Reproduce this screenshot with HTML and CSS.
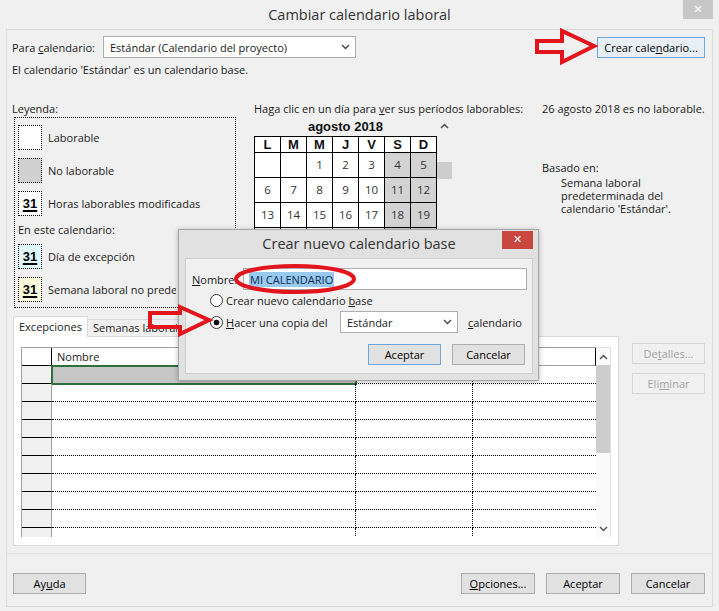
FILE: index.html
```html
<!DOCTYPE html>
<html lang="es">
<head>
<meta charset="utf-8">
<title>Cambiar calendario laboral</title>
<link rel="stylesheet" href="styles.css">
</head>
<body>
<div class="window">
  <div class="titlebar">
    <span></span>
    <div class="title">Cambiar calendario laboral</div>
    <div class="close-gray">✕</div>
  </div>
  <div class="panel">
    <div class="row-top">
      <div class="lbl">Para <u>c</u>alendario:</div>
      <div class="select sel-main"><span>Estándar (Calendario del proyecto)</span>
        <svg class="chev" width="9" height="6" viewBox="0 0 9 6"><path d="M1 1 L4.5 4.5 L8 1" fill="none" stroke="#444" stroke-width="1.3"/></svg>
      </div>
      <button class="btn btn-default btn-crear">Crear cale<u>n</u>dario...</button>
    </div>
    <div class="note">El calendario 'Estándar' es un calendario base.</div>
    <div class="main">
      <div class="col-legend">
        <div class="cap">Leyenda:</div>
        <div class="legend">
          <div class="item"><div class="sw"></div><span>Laborable</span></div>
          <div class="item"><div class="sw sw-gray"></div><span>No laborable</span></div>
          <div class="item"><div class="sw"><u>31</u></div><span>Horas laborables modificadas</span></div>
          <div class="group-label">En este calendario:</div>
          <div class="item"><div class="sw sw-cyan"><u>31</u></div><span>Día de excepción</span></div>
          <div class="item"><div class="sw sw-yellow"><u>31</u></div><span class="clip-legend">Semana laboral no predeterminada</span></div>
        </div>
      </div>
      <div class="col-cal">
        <div class="cap">Haga clic en un día para <u>v</u>er sus períodos laborables:</div>
        <div class="cal-wrap">
          <div class="cal">
            <div class="month">agosto 2018</div>
            <div class="grid">
              <div class="h">L</div><div class="h">M</div><div class="h">M</div><div class="h">J</div><div class="h">V</div><div class="h">S</div><div class="h">D</div>
              <div class="d"></div><div class="d"></div><div class="d">1</div><div class="d">2</div><div class="d">3</div><div class="d we">4</div><div class="d we">5</div>
              <div class="d">6</div><div class="d">7</div><div class="d">8</div><div class="d">9</div><div class="d">10</div><div class="d we">11</div><div class="d we">12</div>
              <div class="d">13</div><div class="d">14</div><div class="d">15</div><div class="d">16</div><div class="d">17</div><div class="d we">18</div><div class="d we">19</div>
              <div class="d"></div><div class="d"></div><div class="d"></div><div class="d"></div><div class="d"></div><div class="d we"></div><div class="d we"></div>
              <div class="d"></div><div class="d"></div><div class="d"></div><div class="d"></div><div class="d"></div><div class="d we"></div><div class="d we"></div>
            </div>
          </div>
          <div class="cal-scroll">
            <svg class="up" width="9" height="6" viewBox="0 0 9 6"><path d="M1 5 L4.5 1.5 L8 5" fill="none" stroke="#555" stroke-width="1.5"/></svg>
            <div class="cal-thumb"></div>
          </div>
        </div>
      </div>
      <div class="col-info">
        <div class="cap">26 agosto 2018 es no laborable.</div>
        <div class="based">Basado en:</div>
        <div class="based-text">Semana laboral<br>predeterminada del<br>calendario 'Estándar'.</div>
      </div>
    </div>
    <div class="lower">
      <div class="tabs-block">
        <div class="tabs">
          <div class="tab active">Excepciones</div>
          <div class="tab tab-clip"><span>Semanas laborales</span></div>
        </div>
        <div class="tab-panel">
          <div class="sheet">
            <div class="sheet-data">
              <div class="srow hdr"><div class="rh corner"></div><div class="c1">Nombre</div><div class="c2"></div><div class="c3"></div></div>
              <div class="srow"><div class="rh"></div><div class="c1 sel"></div><div class="c2"></div><div class="c3"></div></div>
              <div class="srow"><div class="rh"></div><div class="c1"></div><div class="c2"></div><div class="c3"></div></div>
              <div class="srow"><div class="rh"></div><div class="c1"></div><div class="c2"></div><div class="c3"></div></div>
              <div class="srow"><div class="rh"></div><div class="c1"></div><div class="c2"></div><div class="c3"></div></div>
              <div class="srow"><div class="rh"></div><div class="c1"></div><div class="c2"></div><div class="c3"></div></div>
              <div class="srow"><div class="rh"></div><div class="c1"></div><div class="c2"></div><div class="c3"></div></div>
              <div class="srow"><div class="rh"></div><div class="c1"></div><div class="c2"></div><div class="c3"></div></div>
              <div class="srow"><div class="rh"></div><div class="c1"></div><div class="c2"></div><div class="c3"></div></div>
              <div class="srow"><div class="rh"></div><div class="c1"></div><div class="c2"></div><div class="c3"></div></div>
              <div class="srow last"><div class="rh"></div><div class="c1"></div><div class="c2"></div><div class="c3"></div></div>
            </div>
            <div class="vscroll">
              <div class="vs-btn"><svg width="9" height="6" viewBox="0 0 9 6"><path d="M1 5 L4.5 1.5 L8 5" fill="none" stroke="#555" stroke-width="1.5"/></svg></div>
              <div class="vs-thumb"></div>
              <div class="vs-track"></div>
              <div class="vs-btn"><svg width="9" height="6" viewBox="0 0 9 6"><path d="M1 1 L4.5 4.5 L8 1" fill="none" stroke="#555" stroke-width="1.5"/></svg></div>
            </div>
          </div>
        </div>
      </div>
      <div class="side-btns">
        <button class="btn btn-disabled">De<u>t</u>alles...</button>
        <button class="btn btn-disabled">Eli<u>m</u>inar</button>
      </div>
    </div>
    <div class="footer">
      <button class="btn">Ay<u>u</u>da</button>
      <div class="spacer"></div>
      <button class="btn"><u>O</u>pciones...</button>
      <button class="btn">Aceptar</button>
      <button class="btn">Cancelar</button>
    </div>
  </div>

  <div class="dialog">
    <div class="dlg-title">
      <span></span>
      <div class="dlg-title-text">Crear nuevo calendario base</div>
      <div class="close-red">✕</div>
    </div>
    <div class="dlg-body">
      <div class="name-row">
        <div class="name-lbl"><u>N</u>ombre:</div>
        <div class="input"><span class="selected">MI CALENDARIO</span></div>
      </div>
      <div class="radio-row r1">
        <span class="radio"></span><span class="rlabel">Crear nuevo calendario <u>b</u>ase</span>
      </div>
      <div class="radio-row r2">
        <span class="radio checked"></span><span class="rlabel copy"><u>H</u>acer una copia del</span>
        <div class="select sel-dlg"><span>Estándar</span>
          <svg class="chev" width="9" height="6" viewBox="0 0 9 6"><path d="M1 1 L4.5 4.5 L8 1" fill="none" stroke="#444" stroke-width="1.3"/></svg>
        </div>
        <span class="cal-word"><u>c</u>alendario</span>
      </div>
      <div class="dlg-btns">
        <button class="btn btn-default">Aceptar</button>
        <button class="btn">Cancelar</button>
      </div>
    </div>
  </div>

  <svg class="annot" width="719" height="611" viewBox="0 0 719 611">
    <polygon points="537,41 562,41 562,31 594,46 562,62 562,52 537,52" fill="none" stroke="#e3151c" stroke-width="4" stroke-linejoin="miter"/>
    <polygon points="150,313 180,313 180,307 209,320 180,334 180,327 150,327" fill="none" stroke="#e3151c" stroke-width="4" stroke-linejoin="miter"/>
    <ellipse cx="295" cy="279" rx="59" ry="13" fill="none" stroke="#e3151c" stroke-width="4"/>
  </svg>
</div>
</body>
</html>
```

FILE: styles.css
```css
* { box-sizing: border-box; }
html, body { margin: 0; padding: 0; }
body {
  width: 719px;
  height: 611px;
  overflow: hidden;
  background: #f0f0f0;
  font-family: "Open Sans", "Noto Sans", sans-serif;
  font-size: 11px;
  color: #1a1a1a;
}
u { text-decoration: underline; text-underline-offset: 1px; }

.window { position: relative; width: 719px; height: 611px; background: #f0f0f0; }

.titlebar {
  height: 29px;
  display: grid;
  grid-template-columns: 1fr auto 1fr;
  align-items: start;
}
.title { font-size: 14.5px; line-height: 29px; color: #333; }
.close-gray {
  justify-self: end;
  margin-right: 6px;
  width: 30px;
  height: 19px;
  background: #c7c7c7;
  color: #fff;
  font-size: 11px;
  line-height: 19px;
  text-align: center;
  font-family: "DejaVu Sans", sans-serif;
}

.panel {
  margin: 0 6px;
  height: 578px;
  border: 1px solid #dadada;
  padding: 0 7px 0 5px;
  display: flex;
  flex-direction: column;
}

.row-top {
  display: flex;
  align-items: center;
  margin-top: 6px;
  height: 22px;
}
.lbl { width: 91px; }
.select {
  display: flex;
  align-items: center;
  justify-content: space-between;
  background: #fff;
  border: 1px solid #abadb3;
  height: 22px;
  padding: 0 5px 0 6px;
}
.sel-main { width: 253px; }
.btn {
  font-family: inherit;
  font-size: 11px;
  color: #000;
  background: #e1e1e1;
  border: 1px solid #adadad;
  height: 21px;
  width: 73px;
  padding: 0;
  line-height: 19px;
}
.btn-default { border-color: #6fa6dd; }
.btn-crear { margin-left: auto; width: 108px; background: #e8eef5; margin-top: 1px; }
.btn-disabled { background: #f0f0f0; border-color: #d6d6d6; color: #a2a2a2; }

.note { margin-top: 4px; line-height: 16px; }

.main {
  display: grid;
  grid-template-columns: 242px 288px 1fr;
  margin-top: 23px;
}
.cap { line-height: 16px; height: 16px; white-space: nowrap; }

.legend {
  margin-left: 2px;
  width: 222px;
  border: 1px dotted #000;
  padding: 7px 0 5px 3px;
  display: flex;
  flex-direction: column;
  gap: 8px;
}
.item { display: flex; align-items: center; gap: 6px; height: 25px; white-space: nowrap; }
.clip-legend { width: 128px; overflow: hidden; }
.sw {
  width: 24px;
  height: 25px;
  flex: none;
  border: 1px dotted #000;
  background: #fff;
  display: flex;
  align-items: center;
  justify-content: center;
  font-family: "Liberation Sans", Arial, sans-serif;
  font-weight: bold;
  font-size: 13px;
  color: #000;
}
.sw u { text-underline-offset: 2px; text-decoration-thickness: 1.5px; }
.sw-gray { background: #d0d0d0; }
.sw-cyan { background: #dff6fb; }
.sw-yellow { background: #fbfbdc; }
.group-label { margin: -2px 0; line-height: 16px; height: 16px; padding-left: 0; }

.cal-wrap { display: flex; margin-top: 1px; margin-left: 0; }
.cal { width: 183px; }
.month {
  height: 18px;
  line-height: 18px;
  text-align: center;
  font-family: "Liberation Sans", Arial, sans-serif;
  font-weight: bold;
  font-size: 13px;
  color: #111;
}
.grid {
  display: grid;
  grid-template-columns: repeat(7, 25px);
  grid-template-rows: 15px repeat(5, 24px);
  gap: 1px;
  padding: 1px;
  background: #000;
  width: 183px;
}
.grid .h {
  background: #fff;
  text-align: center;
  line-height: 15px;
  font-family: "Liberation Sans", Arial, sans-serif;
  font-weight: bold;
  font-size: 13px;
  color: #111;
}
.grid .d {
  background: #fff;
  text-align: center;
  line-height: 24px;
  font-size: 11.5px;
  color: #333;
}
.grid .we { background: #d3d3d3; }
.cal-scroll { width: 15px; display: flex; flex-direction: column; align-items: center; }
.cal-scroll .up { margin-top: 5px; }
.cal-thumb { margin-top: 33px; width: 15px; height: 17px; background: #cdcdcd; }

.based { margin-top: 43px; line-height: 16px; }
.based-text { padding-left: 19px; line-height: 13px; }

.lower { display: flex; margin-top: 8px; }
.tabs-block { margin-left: 1px; width: 606px; }
.tabs { display: flex; height: 20px; align-items: flex-start; }
.tab {
  height: 17px;
  margin-top: 3px;
  padding: 0 5px;
  border: 1px solid #d9d9d9;
  border-left: none;
  border-bottom: none;
  background: #f0f0f0;
  line-height: 15px;
  white-space: nowrap;
}
.tab-clip { width: 100px; }
.tab-clip span { display: inline-block; width: 84px; overflow: hidden; vertical-align: top; }
.tab.active {
  height: 21px;
  margin-top: 0;
  width: 75px;
  border-left: 1px solid #d9d9d9;
  background: #fff;
  position: relative;
  z-index: 1;
  line-height: 20px;
}
.tab-panel {
  height: 210px;
  background: #fff;
  border: 1px solid #d9d9d9;
  padding: 10px 7px 8px 7px;
}
.sheet { display: flex; height: 190px; width: 590px; }
.sheet-data {
  flex: 1;
  height: 190px;
  overflow: hidden;
  border-left: 1px solid #a0a0a0;
  border-top: 1px solid #a0a0a0;
}
.srow { display: flex; height: 18px; }
.srow > div { height: 18px; border-bottom: 1px dotted #000; }
.srow .rh { width: 30px; flex: none; background: #f0f0f0; border-bottom: 1px solid #000; border-right: 1px solid #a0a0a0; }
.srow .c1 { width: 304px; flex: none; border-right: 1px dotted #000; }
.srow .c2 { width: 117px; flex: none; border-right: 1px dotted #000; }
.srow .c3 { flex: 1; }
.srow.hdr > div { background: #fff; border-bottom: 1px solid #a0a0a0; border-right: none; }
.srow.hdr .rh { border-right: 1px solid #000; border-bottom: 1px solid #000; }
.srow.hdr .c1 { padding-left: 5px; line-height: 17px; }
.srow.hdr .c3 { border-right: 1px solid #000; }
.srow .sel { background: #c6c6c6; outline: 2px solid #2f6f3a; outline-offset: -1px; }
.srow.last > div { border-bottom: none; height: 10px; }

.vscroll { width: 15px; height: 190px; display: flex; flex-direction: column; background: #fafafa; border-right: 1px solid #e0e0e0; border-top: 1px solid #e0e0e0; }
.vs-btn { height: 17px; display: flex; align-items: center; justify-content: center; flex: none; }
.vs-thumb { height: 88px; background: #cdcdcd; flex: none; }
.vs-track { flex: 1; }

.side-btns { margin-left: 13px; margin-top: 27px; display: flex; flex-direction: column; gap: 9px; }

.footer {
  margin: 7px -7px 0 -5px;
  border-top: 1px solid #e3e3e3;
  padding: 19px 7px 0 6px;
  display: flex;
  gap: 11px;
}
.footer .spacer { flex: 1; }
.footer .btn { width: 74px; }
.footer .btn:first-child { width: 73px; }

/* Dialog */
.dialog {
  position: absolute;
  left: 178px;
  top: 229px;
  width: 361px;
  height: 152px;
  background: #e1e1e1;
  border: 1px solid #a6a6a6;
  box-shadow: 0 1px 5px rgba(0,0,0,0.28);
  padding: 0 5px 6px 6px;
  display: flex;
  flex-direction: column;
}
.dlg-title {
  height: 28px;
  flex: none;
  display: grid;
  grid-template-columns: 1fr auto 1fr;
  align-items: start;
}
.dlg-title-text { font-size: 14.5px; line-height: 28px; color: #333; white-space: nowrap; }
.close-red {
  justify-self: end;
  margin-top: 1px;
  width: 31px;
  height: 18px;
  background: #c9473f;
  color: #fff;
  font-size: 11px;
  line-height: 18px;
  text-align: center;
  font-family: "DejaVu Sans", sans-serif;
}
.dlg-body {
  flex: 1;
  background: #f0f0f0;
  border: 1px solid #cdcdcd;
  padding: 9px 5px 8px 6px;
}
.name-row { display: flex; align-items: center; height: 22px; }
.name-lbl { width: 51px; }
.input {
  flex: 1;
  height: 22px;
  background: #fff;
  border: 1px solid #abadb3;
  padding-left: 5px;
  display: flex;
  align-items: center;
}
.selected { background: #99c9ef; color: #0d2b55; padding: 0 1px; line-height: 15px; }
.radio-row { display: flex; align-items: center; padding-left: 18px; }
.radio-row.r1 { margin-top: 2px; height: 16px; }
.radio-row.r2 { margin-top: 3px; height: 22px; }
.radio {
  width: 13px;
  height: 13px;
  flex: none;
  border-radius: 50%;
  border: 1px solid #333;
  background: #fff;
}
.radio.checked { background: radial-gradient(circle, #111 0 2.6px, #fff 3.2px); }
.rlabel { margin-left: 3px; white-space: nowrap; }
.rlabel.copy { width: 114px; }
.sel-dlg { width: 118px; }
.cal-word { margin-left: 10px; }
.dlg-btns { margin-top: 11px; display: flex; justify-content: flex-end; gap: 11px; padding-right: 2px; }
.dlg-btns .btn { width: 73px; }

.annot { position: absolute; left: 0; top: 0; pointer-events: none; }
```
